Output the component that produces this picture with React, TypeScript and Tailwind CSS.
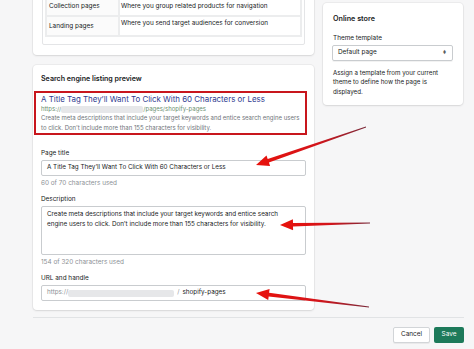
import React from "react";

type P = [number, number];

function arrowPoints(tail: P, tip: P): string {
  const dx = tip[0] - tail[0];
  const dy = tip[1] - tail[1];
  const len = Math.hypot(dx, dy);
  const ux = dx / len;
  const uy = dy / len;
  const nx = -uy;
  const ny = ux;
  const headLen = 13;
  const headW = 5.5;
  const bx = tip[0] - ux * headLen;
  const by = tip[1] - uy * headLen;
  const pts: P[] = [
    [tail[0] + nx * 0.4, tail[1] + ny * 0.4],
    [bx + nx * 1.8, by + ny * 1.8],
    [bx + nx * headW, by + ny * headW],
    [tip[0], tip[1]],
    [bx - nx * headW, by - ny * headW],
    [bx - nx * 1.8, by - ny * 1.8],
    [tail[0] - nx * 0.4, tail[1] - ny * 0.4],
  ];
  return pts.map((p) => `${p[0].toFixed(1)},${p[1].toFixed(1)}`).join(" ");
}

const arrows: [P, P][] = [
  [[366, 127], [256, 165]],
  [[370, 223], [280, 225]],
  [[369, 307], [256, 293]],
];

function Blur({ w }: { w: number }) {
  return (
    <span
      className="inline-block h-[7px] rounded-[2px] bg-[#e6e7e9] align-middle"
      style={{ width: w }}
    />
  );
}

export default function App() {
  return (
    <div
      className="relative h-[349px] w-[474px] overflow-hidden bg-[#f6f6f7] text-[#202223]"
      style={{ fontFamily: "Inter, 'Liberation Sans', sans-serif" }}
    >
      <div className="flex gap-[9px] pl-[33px]">
        {/* left column */}
        <div className="flex w-[281px] flex-col gap-[10px]">
          {/* top card */}
          <div className="-mt-[13px] rounded-[4px] bg-white px-[9px] pb-[10px] pt-[4px] shadow-[0_0_0_1px_rgba(63,63,68,0.05),0_1px_2px_rgba(63,63,68,0.12)]">
            <div className="rounded-[2px] border border-[#e4e5e7] px-[2px] pb-[7px] pt-[3px]">
              <table className="w-full border-collapse text-[6.4px] leading-[8px]">
                <tbody>
                  <tr className="h-[20px]">
                    <td className="w-[73px] border-2 border-[#ecedee] bg-[#fbfbfb] pl-[2px] align-middle">
                      Collection pages
                    </td>
                    <td className="border-2 border-[#ecedee] pl-[1px] align-middle">
                      Where you group related products for navigation
                    </td>
                  </tr>
                  <tr className="h-[20px]">
                    <td className="border-2 border-[#ecedee] bg-[#fbfbfb] pl-[2px] align-middle">
                      Landing pages
                    </td>
                    <td className="border-2 border-[#ecedee] pl-[1px] pt-[2px] align-top">
                      Where you send target audiences for conversion
                    </td>
                  </tr>
                </tbody>
              </table>
            </div>
          </div>

          {/* SEO card */}
          <div className="flex flex-col rounded-[4px] bg-white px-[8px] pb-[9px] pt-[10px] shadow-[0_0_0_1px_rgba(63,63,68,0.05),0_1px_2px_rgba(63,63,68,0.12)]">
            <div className="text-[7.1px] font-semibold leading-[8px]">
              Search engine listing preview
            </div>
            <div className="-ml-[7px] -mr-[1px] mt-[8px] flex flex-col border-2 border-[#c8161d] pl-[5px] pr-[2px] pt-[1px]">
              <div className="text-[7.9px] leading-[11px] text-[#2e3a8f]">
                A Title Tag They’ll Want To Click With 60 Characters or Less
              </div>
              <div className="flex items-center text-[6px] leading-[8px] text-[#6b8f71]">
                <span>https://</span>
                <Blur w={82} />
                <span>/pages/shopify-pages</span>
              </div>
              <div className="text-[6px] leading-[10px] text-[#70757a]">
                Create meta descriptions that include your target keywords and entice search engine users to click. Don’t include more than 155 characters for visibility.
              </div>
            </div>

            <div className="mt-[14px] text-[6.4px] leading-[8px]">Page title</div>
            <div className="mt-[3px] flex h-[16px] items-center rounded-[2px] border border-[#c9cccf] px-[5px] text-[6.3px]">
              A Title Tag They’ll Want To Click With 60 Characters or Less
            </div>
            <div className="mt-[3px] text-[6.4px] leading-[8px] text-[#8c9196]">
              60 of 70 characters used
            </div>

            <div className="mt-[8px] text-[6.4px] leading-[8px]">Description</div>
            <div className="mt-[3px] h-[49px] rounded-[2px] border border-[#c9cccf] pl-[5px] pr-[18px] pt-[2px] text-[6.3px] leading-[10px]">
              Create meta descriptions that include your target keywords and entice search engine users to click. Don’t include more than 155 characters for visibility.
            </div>
            <div className="mt-[3px] text-[6.4px] leading-[8px] text-[#8c9196]">
              154 of 320 characters used
            </div>

            <div className="mt-[8px] text-[6.4px] leading-[8px]">URL and handle</div>
            <div className="mt-[3px] flex h-[16px] items-center rounded-[2px] border border-[#c9cccf] pl-[5px] text-[6.3px]">
              <span className="text-[#8c9196]">https://</span>
              <Blur w={106} />
              <span className="ml-[3px] text-[#8c9196]">/</span>
              <span className="ml-[3px]">shopify-pages</span>
            </div>
          </div>
        </div>

        {/* right column */}
        <div className="mt-[3px] flex w-[140px] flex-col self-start rounded-[4px] bg-white px-[10px] pb-[9px] pt-[11px] shadow-[0_0_0_1px_rgba(63,63,68,0.05),0_1px_2px_rgba(63,63,68,0.12)]">
          <div className="text-[7.2px] font-semibold leading-[9px]">Online store</div>
          <div className="mt-[11px] text-[6.4px] leading-[8px]">Theme template</div>
          <div className="-ml-[1px] mt-[3px] flex h-[16px] items-center justify-between rounded-[2px] border border-[#c9cccf] pl-[5px] pr-[6px] text-[6.4px] shadow-[0_1px_0_rgba(0,0,0,0.05)]">
            <span>Default page</span>
            <span className="flex flex-col text-[3px] leading-[3px] text-[#5c5f62]">
              <span>▲</span>
              <span>▼</span>
            </span>
          </div>
          <div className="mt-[7px] text-[6.2px] leading-[9.3px]">
            Assign a template from your current theme to define how the page is displayed.
          </div>
        </div>
      </div>

      {/* footer */}
      <div className="ml-[33px] mr-[10px] mt-[7px] flex justify-end gap-[4px] border-t border-[#e1e3e5] pt-[9px]">
        <button className="flex h-[16px] w-[37px] items-center justify-center rounded-[2px] border border-[#d2d5d8] bg-white text-[6.4px] text-[#202223] shadow-[0_1px_0_rgba(0,0,0,0.05)]">
          Cancel
        </button>
        <button className="flex h-[16px] w-[30px] items-center justify-center rounded-[2px] bg-[#1d7a5a] text-[6.4px] text-white">
          Save
        </button>
      </div>

      {/* annotation arrows */}
      <svg className="pointer-events-none absolute inset-0" width={474} height={349}>
        <defs>
          {arrows.map(([t, h], i) => (
            <linearGradient
              key={i}
              id={`ag${i}`}
              gradientUnits="userSpaceOnUse"
              x1={t[0]}
              y1={t[1]}
              x2={h[0]}
              y2={h[1]}
            >
              <stop offset="0" stopColor="#7a2a3a" />
              <stop offset="0.45" stopColor="#d4141a" />
              <stop offset="1" stopColor="#e8120c" />
            </linearGradient>
          ))}
        </defs>
        {arrows.map(([t, h], i) => (
          <polygon key={i} points={arrowPoints(t, h)} fill={`url(#ag${i})`} />
        ))}
      </svg>
    </div>
  );
}
